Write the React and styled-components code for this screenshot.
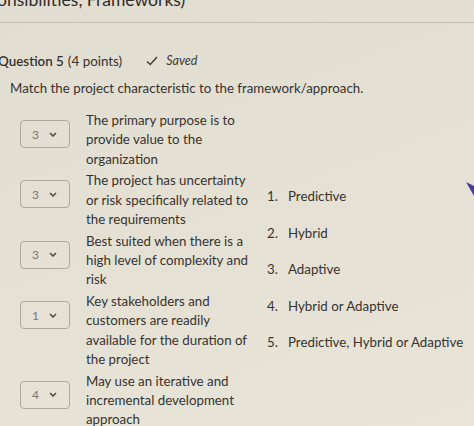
import React from "react";
import styled, { createGlobalStyle } from "styled-components";

const Global = createGlobalStyle`
  html, body { margin: 0; padding: 0; }
  body {
    background: #e4dfd3;
    font-family: Lato, "Open Sans", sans-serif;
    color: #36332f;
    overflow: hidden;
  }
`;

const Page = styled.div`
  position: relative;
  width: 474px;
  height: 426px;
  overflow: hidden;
  background: linear-gradient(160deg, #e2ddd1 0%, #e6e1d5 55%, #e9e4d8 100%);
`;

const SectionTitle = styled.div`
  font-size: 17.5px;
  line-height: 22px;
  margin: -11px 0 0 -3px;
  white-space: nowrap;
  color: #2f2c29;
`;

const Divider = styled.div`
  height: 0;
  border-top: 1px solid #c3beb2;
  margin-top: 11px;
`;

const QuestionHeader = styled.div`
  display: flex;
  align-items: center;
  margin: 28px 0 0 -2px;
  font-size: 13.4px;
  line-height: 20px;
  gap: 4px;
`;

const QTitle = styled.span`
  font-weight: 600;
`;

const Points = styled.span`
  font-weight: 400;
`;

const SavedWrap = styled.span`
  display: inline-flex;
  align-items: center;
  gap: 8px;
  margin-left: 20px;
  font-style: italic;
  font-size: 12.5px;
  color: #3d3a36;
`;

const CheckIcon = styled.svg`
  flex: none;
`;

const Prompt = styled.div`
  font-size: 13.3px;
  line-height: 20px;
  margin: 7px 0 0 10px;
`;

const Body = styled.div`
  display: grid;
  grid-template-columns: 267px 1fr;
  margin-top: 13px;
`;

const Matches = styled.div`
  display: flex;
  flex-direction: column;
  gap: 2.5px;
`;

const MatchRow = styled.div`
  display: flex;
  align-items: flex-start;
  gap: 16px;
  padding-left: 20px;
`;

const SelectBox = styled.div`
  flex: none;
  width: 50px;
  height: 28px;
  margin-top: 9px;
  box-sizing: border-box;
  border: 1px solid #aea99e;
  border-radius: 4px;
  display: flex;
  align-items: center;
  padding-left: 11px;
  gap: 10px;
  font-size: 12px;
  color: #7a766f;
`;

const MatchText = styled.div`
  width: 166px;
  font-size: 13.3px;
  line-height: 19.3px;
`;

const Options = styled.ol`
  list-style: none;
  margin: 76px 0 0 0;
  padding: 0;
  display: flex;
  flex-direction: column;
  gap: 17px;
`;

const Option = styled.li`
  display: flex;
  font-size: 13.3px;
  line-height: 19.5px;
  white-space: nowrap;
`;

const OptNum = styled.span`
  width: 21px;
  flex: none;
`;

const Cursor = styled.svg`
  position: absolute;
  right: 0;
  top: 181px;
`;

const Check = () => (
  <CheckIcon width="12" height="10" viewBox="0 0 12 10">
    <path d="M1 5.5 L4.3 8.5 L11 1" fill="none" stroke="#3d3a36" strokeWidth="1.4" />
  </CheckIcon>
);

const Chevron = () => (
  <svg width="8" height="5" viewBox="0 0 8 5">
    <path d="M1 1 L4 4 L7 1" fill="none" stroke="#4a4741" strokeWidth="1.5" />
  </svg>
);

const matches = [
  { v: "3", t: "The primary purpose is to provide value to the organization" },
  { v: "3", t: "The project has uncertainty or risk specifically related to the requirements" },
  { v: "3", t: "Best suited when there is a high level of complexity and risk" },
  { v: "1", t: "Key stakeholders and customers are readily available for the duration of the project" },
  { v: "4", t: "May use an iterative and incremental development approach" },
];

const options = [
  "Predictive",
  "Hybrid",
  "Adaptive",
  "Hybrid or Adaptive",
  "Predictive, Hybrid or Adaptive",
];

export default function App() {
  return (
    <Page>
      <Global />
      <SectionTitle>onsibilities, Frameworks)</SectionTitle>
      <Divider />
      <QuestionHeader>
        <QTitle>Question 5</QTitle>
        <Points>(4 points)</Points>
        <SavedWrap>
          <Check />
          Saved
        </SavedWrap>
      </QuestionHeader>
      <Prompt>Match the project characteristic to the framework/approach.</Prompt>
      <Body>
        <Matches>
          {matches.map((m, i) => (
            <MatchRow key={i}>
              <SelectBox>
                <span>{m.v}</span>
                <Chevron />
              </SelectBox>
              <MatchText>{m.t}</MatchText>
            </MatchRow>
          ))}
        </Matches>
        <Options>
          {options.map((o, i) => (
            <Option key={i}>
              <OptNum>{i + 1}.</OptNum>
              {o}
            </Option>
          ))}
        </Options>
      </Body>
      <Cursor width="9" height="16" viewBox="0 0 9 16">
        <path d="M1 1 L9 5 L9 15 Z" fill="#4b3a9a" />
      </Cursor>
    </Page>
  );
}
